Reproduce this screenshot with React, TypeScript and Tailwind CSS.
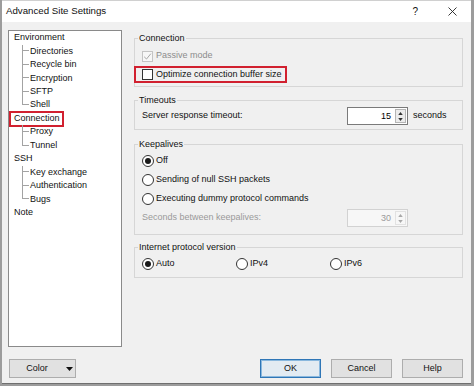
import React from "react";

const tree = [
  { label: "Environment", children: ["Directories", "Recycle bin", "Encryption", "SFTP", "Shell"] },
  { label: "Connection", children: ["Proxy", "Tunnel"], marked: true },
  { label: "SSH", children: ["Key exchange", "Authentication", "Bugs"] },
  { label: "Note", children: [] as string[] },
];

const Check = ({ checked, disabled }: { checked?: boolean; disabled?: boolean }) => (
  <span
    className={`w-[11px] h-[11px] shrink-0 border flex items-center justify-center ${
      disabled ? "border-[#c4c4c4] bg-[#f7f7f7]" : "border-[#333333] bg-white"
    }`}
  >
    {checked && (
      <svg viewBox="0 0 10 10" className="w-[9px] h-[9px]">
        <path d="M1.3 5.3 L3.9 7.8 L8.8 1.8" stroke={disabled ? "#a6a6a6" : "#000"} strokeWidth="1.1" fill="none" />
      </svg>
    )}
  </span>
);

const Radio = ({ checked }: { checked?: boolean }) => (
  <span className="w-[12px] h-[12px] shrink-0 rounded-full border border-[#333333] bg-white flex items-center justify-center">
    {checked && <span className="w-[6px] h-[6px] rounded-full bg-[#1a1a1a]" />}
  </span>
);

const Spin = ({ value, disabled }: { value: string; disabled?: boolean }) => (
  <div
    className={`flex h-[18px] w-[61px] border ${
      disabled ? "border-[#d2d2d2] bg-[#f7f7f7] text-[#9a9a9a]" : "border-[#7a7a7a] bg-white text-black"
    }`}
  >
    <span className="flex-1 text-right pr-[4px] leading-[16px]">{value}</span>
    <span
      className={`w-[11px] my-[1px] mr-[1px] flex flex-col border ${
        disabled ? "border-[#e2e2e2]" : "border-[#b5b5b5] bg-[#ececec]"
      }`}
    >
      <span className="flex-1 flex items-center justify-center">
        <svg viewBox="0 0 6 4" className="w-[5px] h-[3px]">
          <path d="M0 4 L3 0 L6 4 Z" fill={disabled ? "#a8a8a8" : "#333"} />
        </svg>
      </span>
      <span className="flex-1 flex items-center justify-center">
        <svg viewBox="0 0 6 4" className="w-[5px] h-[3px]">
          <path d="M0 0 L6 0 L3 4 Z" fill={disabled ? "#a8a8a8" : "#333"} />
        </svg>
      </span>
    </span>
  </div>
);

const Group = ({ title, className, children }: { title: string; className: string; children: React.ReactNode }) => (
  <fieldset className={`border border-[#d6d6d6] p-0 ${className}`}>
    <legend className="ml-[3px] px-[1px] leading-[11px]">{title}</legend>
    {children}
  </fieldset>
);

const Button = ({ label, primary }: { label: string; primary?: boolean }) => (
  <div
    className={`w-[61px] h-[19px] flex items-center justify-center border ${
      primary
        ? "border-[#2f76b6] bg-[#e3ebf2] shadow-[inset_0_0_0_1px_#8ab8de]"
        : "border-[#adadad] bg-[#e1e1e1]"
    }`}
  >
    {label}
  </div>
);

export default function App() {
  return (
    <div className="w-[474px] h-[386px] bg-[#9c9c9c] pl-[2px] pr-[3px] pb-[2px] font-['Liberation_Sans',Arial,sans-serif] text-[9px] text-[#111]">
      <div className="flex flex-col h-full bg-[#f0f0f0] border-b border-[#6f6f6f]">
        <div className="h-[22px] bg-white flex items-center pl-[4px] border-t border-[#d0d0d0]">
          <span className="text-[9.7px]">Advanced Site Settings</span>
          <div className="ml-auto flex items-center gap-[30px] pr-[14px]">
            <span className="text-[10px]">?</span>
            <svg viewBox="0 0 9 9" className="w-[9px] h-[9px]">
              <path d="M0.5 0.5 L8.5 8.5 M8.5 0.5 L0.5 8.5" stroke="#222" strokeWidth="0.9" />
            </svg>
          </div>
        </div>

        <div className="flex pt-[8px] pl-[6px] pr-[8px] gap-[12px]">
          <div className="w-[114px] h-[317px] bg-white border border-[#8a8a8a] pt-[0.3px] pl-[5px]">
            {tree.map((node) => (
              <div key={node.label}>
                {node.marked ? (
                  <div className="ml-[-5px] pl-[3px] w-[55px] h-[16.1px] my-[-1.33px] flex items-center border-2 border-[#d1202f]">
                    {node.label}
                  </div>
                ) : (
                  <div className="h-[13.45px] flex items-center">{node.label}</div>
                )}
                {node.children.map((child, i) => {
                  const last = i === node.children.length - 1;
                  return (
                    <div key={child} className="h-[13.45px] flex items-center">
                      <span className="ml-[8px] w-[7px] h-full flex flex-col">
                        <span className="h-1/2 border-l border-b border-[#a3a3a3]" />
                        <span className={`h-1/2 ${last ? "" : "border-l border-[#a3a3a3]"}`} />
                      </span>
                      <span className="ml-[1px]">{child}</span>
                    </div>
                  );
                })}
              </div>
            ))}
          </div>

          <div className="w-[329px] flex flex-col">
            <Group title="Connection" className="mt-[2.5px]">
              <div className="pl-[7px] pt-[3.5px] pb-[3px]">
                <div className="h-[18px] flex items-center gap-[3px] text-[#8c8c8c]">
                  <Check checked disabled />
                  <span>Passive mode</span>
                </div>
                <div className="h-[17px] mt-[1px] ml-[-8px] pl-[6px] w-[153px] flex items-center gap-[3px] border-2 border-[#d1202f]">
                  <Check />
                  <span>Optimize connection buffer size</span>
                </div>
              </div>
            </Group>

            <Group title="Timeouts" className="mt-[7.5px]">
              <div className="pl-[7px] pt-[1.5px] pb-[4px] h-[23.5px] flex items-center">
                <span className="w-[205px]">Server response timeout:</span>
                <Spin value="15" />
                <span className="ml-[5px]">seconds</span>
              </div>
            </Group>

            <Group title="Keepalives" className="mt-[8.5px]">
              <div className="pl-[7px] pt-[2px] pb-[6.5px]">
                <div className="h-[19px] flex items-center gap-[2px]">
                  <Radio checked />
                  <span>Off</span>
                </div>
                <div className="h-[19px] flex items-center gap-[2px]">
                  <Radio />
                  <span>Sending of null SSH packets</span>
                </div>
                <div className="h-[19px] flex items-center gap-[2px]">
                  <Radio />
                  <span>Executing dummy protocol commands</span>
                </div>
                <div className="h-[19px] flex items-center text-[#9a9a9a]">
                  <span className="w-[205px]">Seconds between keepalives:</span>
                  <Spin value="30" disabled />
                </div>
              </div>
            </Group>

            <Group title="Internet protocol version" className="mt-[6.5px]">
              <div className="pl-[7px] pt-[2.5px] pb-[4px] flex">
                {["Auto", "IPv4", "IPv6"].map((v, i) => (
                  <div key={v} className="w-[94px] h-[18px] flex items-center gap-[2px]">
                    <Radio checked={i === 0} />
                    <span>{v}</span>
                  </div>
                ))}
              </div>
            </Group>
          </div>
        </div>

        <div className="flex mt-[12px] pl-[7px] pr-[8px] gap-[10px]">
          <div className="w-[67px] h-[19px] flex items-center border border-[#adadad] bg-[#e1e1e1]">
            <span className="ml-[16px] w-[22px] text-center">Color</span>
            <svg viewBox="0 0 7 4" className="ml-[18px] w-[7px] h-[4px]">
              <path d="M0 0 L7 0 L3.5 4 Z" fill="#111" />
            </svg>
          </div>
          <div className="ml-auto flex gap-[10px]">
            <Button label="OK" primary />
            <Button label="Cancel" />
            <Button label="Help" />
          </div>
        </div>
      </div>
    </div>
  );
}
